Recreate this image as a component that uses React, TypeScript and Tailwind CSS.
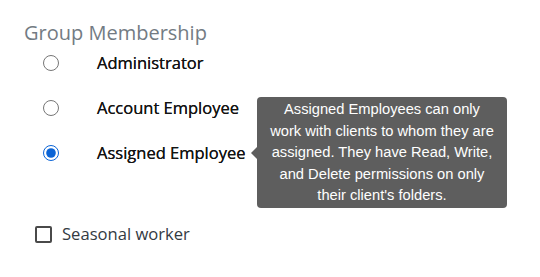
import React from 'react';

const roles = [
  { id: 'admin', label: 'Administrator' },
  { id: 'account', label: 'Account Employee' },
  { id: 'assigned', label: 'Assigned Employee' },
];

const App: React.FC = () => {
  const selected = 'assigned';
  return (
    <div className="relative w-[540px] h-[277px] bg-white overflow-hidden font-['Open_Sans',sans-serif]">
      <h2 className="pt-[19px] pl-[24px] text-[20px] leading-[28px] text-[#737b83] font-normal">Group Membership</h2>

      <div className="mt-[1px] flex flex-col gap-[15px] pl-[43px]">
        {roles.map((r) => (
          <label key={r.id} className="h-[30px] flex items-center">
            <input
              type="radio"
              name="group"
              defaultChecked={r.id === selected}
              className="w-[16px] h-[16px] m-0 accent-[#0b64d6]"
            />
            <span className="ml-[38px] text-[16.5px] font-medium text-[#141414] [text-shadow:0_0_0.4px_#141414]">{r.label}</span>
          </label>
        ))}
      </div>

      <label className="mt-[51px] h-[30px] pl-[35px] flex items-center">
        <span className="w-[17px] h-[17px] border-2 border-[#4a4a4a] rounded-[2px] bg-white" />
        <span className="ml-[10px] text-[16.6px] text-[#333a42]">Seasonal worker</span>
      </label>

      {/* tooltip for the selected role */}
      <div className="absolute left-[257px] top-[97px] w-[250px] h-[111px] bg-[#5e5e5e] rounded-[4px] px-[10px] pt-[2px] text-center text-white text-[14.7px] leading-[21.6px] font-['Liberation_Sans',Arial,sans-serif]">
        <span className="absolute -left-[6px] top-1/2 -translate-y-1/2 w-0 h-0 border-y-[6px] border-y-transparent border-r-[6px] border-r-[#5e5e5e]" />
        Assigned Employees can only work with clients to whom they are assigned. They have Read, Write, and Delete permissions on only their client's folders.
      </div>
    </div>
  );
};

export default App;
